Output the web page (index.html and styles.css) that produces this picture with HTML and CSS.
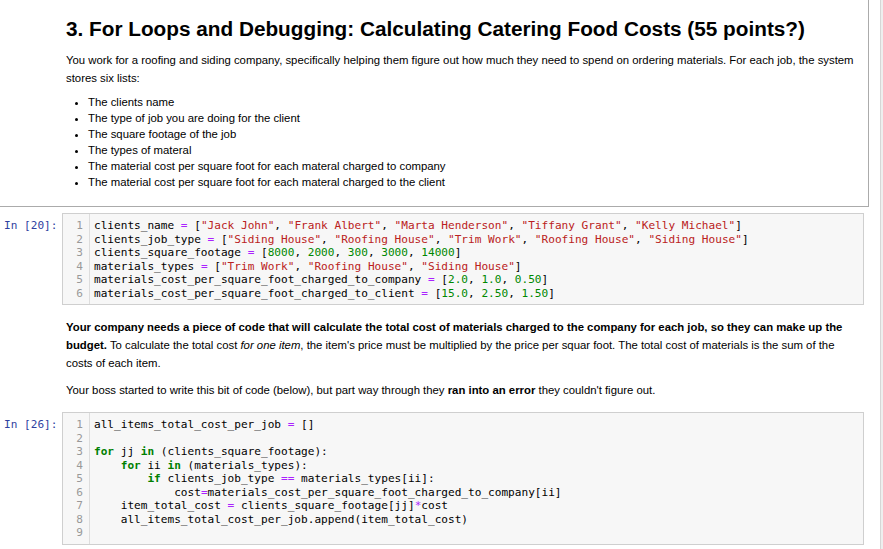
FILE: index.html
```html
<!DOCTYPE html>
<html>
<head>
<meta charset="utf-8">
<link rel="stylesheet" href="styles.css">
</head>
<body>
<div class="page">
  <div class="notebook">
    <div class="md-cell selected">
      <h2 class="title">3. For Loops and Debugging: Calculating Catering Food Costs (55 points?)</h2>
      <p class="para">You work for a roofing and siding company, specifically helping them figure out how much they need to spend on ordering materials. For each job, the system stores six lists:</p>
      <ul class="list">
        <li>The clients name</li>
        <li>The type of job you are doing for the client</li>
        <li>The square footage of the job</li>
        <li>The types of materal</li>
        <li>The material cost per square foot for each materal charged to company</li>
        <li>The material cost per square foot for each materal charged to the client</li>
      </ul>
    </div>

    <div class="code-cell first">
      <div class="prompt">In [20]:</div>
      <div class="editor">
        <div class="gutter"><div>1</div><div>2</div><div>3</div><div>4</div><div>5</div><div>6</div></div>
        <div class="lines">
          <div class="ln">clients_name <span class="op">=</span> [<span class="str">"Jack John"</span>, <span class="str">"Frank Albert"</span>, <span class="str">"Marta Henderson"</span>, <span class="str">"Tiffany Grant"</span>, <span class="str">"Kelly Michael"</span>]</div>
          <div class="ln">clients_job_type <span class="op">=</span> [<span class="str">"Siding House"</span>, <span class="str">"Roofing House"</span>, <span class="str">"Trim Work"</span>, <span class="str">"Roofing House"</span>, <span class="str">"Siding House"</span>]</div>
          <div class="ln">clients_square_footage <span class="op">=</span> [<span class="num">8000</span>, <span class="num">2000</span>, <span class="num">300</span>, <span class="num">3000</span>, <span class="num">14000</span>]</div>
          <div class="ln">materials_types <span class="op">=</span> [<span class="str">"Trim Work"</span>, <span class="str">"Roofing House"</span>, <span class="str">"Siding House"</span>]</div>
          <div class="ln">materials_cost_per_square_foot_charged_to_company <span class="op">=</span> [<span class="num">2.0</span>, <span class="num">1.0</span>, <span class="num">0.50</span>]</div>
          <div class="ln">materials_cost_per_square_foot_charged_to_client <span class="op">=</span> [<span class="num">15.0</span>, <span class="num">2.50</span>, <span class="num">1.50</span>]</div>
        </div>
      </div>
    </div>

    <div class="md-cell plain">
      <p class="para"><b>Your company needs a piece of code that will calculate the total cost of materials charged to the company for each job, so they can make up the budget.</b> To calculate the total cost <i>for one item</i>, the item's price must be multiplied by the price per squar foot. The total cost of materials is the sum of the costs of each item.</p>
      <p class="para second">Your boss started to write this bit of code (below), but part way through they <b>ran into an error</b> they couldn't figure out.</p>
    </div>

    <div class="code-cell second">
      <div class="prompt">In [26]:</div>
      <div class="editor">
        <div class="gutter"><div>1</div><div>2</div><div>3</div><div>4</div><div>5</div><div>6</div><div>7</div><div>8</div><div>9</div></div>
        <div class="lines">
          <div class="ln">all_items_total_cost_per_job <span class="op">=</span> []</div>
          <div class="ln"> </div>
          <div class="ln"><span class="kw">for</span> jj <span class="kw">in</span> (clients_square_footage):</div>
          <div class="ln">    <span class="kw">for</span> ii <span class="kw">in</span> (materials_types):</div>
          <div class="ln">        <span class="kw">if</span> clients_job_type <span class="op">==</span> materials_types[ii]:</div>
          <div class="ln">            cost<span class="op">=</span>materials_cost_per_square_foot_charged_to_company[ii]</div>
          <div class="ln">    item_total_cost <span class="op">=</span> clients_square_footage[jj]<span class="op">*</span>cost</div>
          <div class="ln">    all_items_total_cost_per_job.append(item_total_cost)</div>
          <div class="ln"> </div>
        </div>
      </div>
    </div>
  </div>
  <div class="scrollbar"></div>
</div>
</body>
</html>
```

FILE: styles.css
```css
html, body {
  margin: 0;
  padding: 0;
  background: #ffffff;
}

body {
  font-family: "Liberation Sans", Arial, sans-serif;
  color: #000000;
}

.page {
  display: flex;
  width: 883px;
  height: 549px;
  overflow: hidden;
}

.notebook {
  width: 880px;
  flex: none;
}

.scrollbar {
  width: 3px;
  flex: none;
  box-sizing: border-box;
  background: #eeeeee;
  border-left: 1px solid #d6d6d6;
}

.md-cell {
  box-sizing: border-box;
  padding-left: 66px;
}

.md-cell.selected {
  width: 869px;
  padding-top: 17px;
  padding-bottom: 16px;
  padding-right: 8px;
  border-right: 1px solid #ababab;
  border-bottom: 1px solid #ababab;
}

.md-cell.plain {
  width: 869px;
  padding-top: 13px;
  padding-right: 8px;
}

.title {
  margin: 0;
  font-size: 20.75px;
  line-height: 24px;
  font-weight: bold;
  letter-spacing: 0;
}

.para {
  margin: 10px 0 0 0;
  font-size: 11.35px;
  line-height: 18px;
}

.md-cell.plain .para {
  margin-top: 0;
}

.md-cell.plain .para.second {
  margin-top: 9px;
}

.list {
  margin: 7px 0 0 0;
  padding-left: 22px;
  font-size: 11.35px;
  line-height: 16px;
}

.code-cell {
  display: flex;
}

.code-cell.first {
  margin-top: 6px;
}

.code-cell.second {
  margin-top: 13px;
}

.prompt {
  width: 62px;
  flex: none;
  box-sizing: border-box;
  padding-left: 4px;
  padding-top: 6px;
  font-family: "DejaVu Sans Mono", "Liberation Mono", monospace;
  font-size: 11.1px;
  line-height: 13.5px;
  color: #303f9f;
  white-space: pre;
}

.editor {
  width: 802px;
  flex: none;
  box-sizing: border-box;
  display: flex;
  background: #f7f7f7;
  border: 1px solid #cfcfcf;
  padding: 5px 0 4px 0;
  font-family: "DejaVu Sans Mono", "Liberation Mono", monospace;
  font-size: 11.1px;
  line-height: 13.5px;
}

.gutter {
  width: 27px;
  flex: none;
  box-sizing: border-box;
  padding-right: 6px;
  text-align: right;
  color: #999999;
  border-right: 1px solid #dddddd;
  margin-top: -5px;
  margin-bottom: -4px;
  padding-top: 5px;
  padding-bottom: 4px;
}

.gutter div {
  height: 13.5px;
}

.lines {
  padding-left: 4px;
  color: #000000;
}

.ln {
  height: 13.5px;
  white-space: pre;
}

.kw {
  color: #008000;
  font-weight: bold;
}

.str {
  color: #ba2121;
}

.num {
  color: #008800;
}

.op {
  color: #aa22ff;
}
```
